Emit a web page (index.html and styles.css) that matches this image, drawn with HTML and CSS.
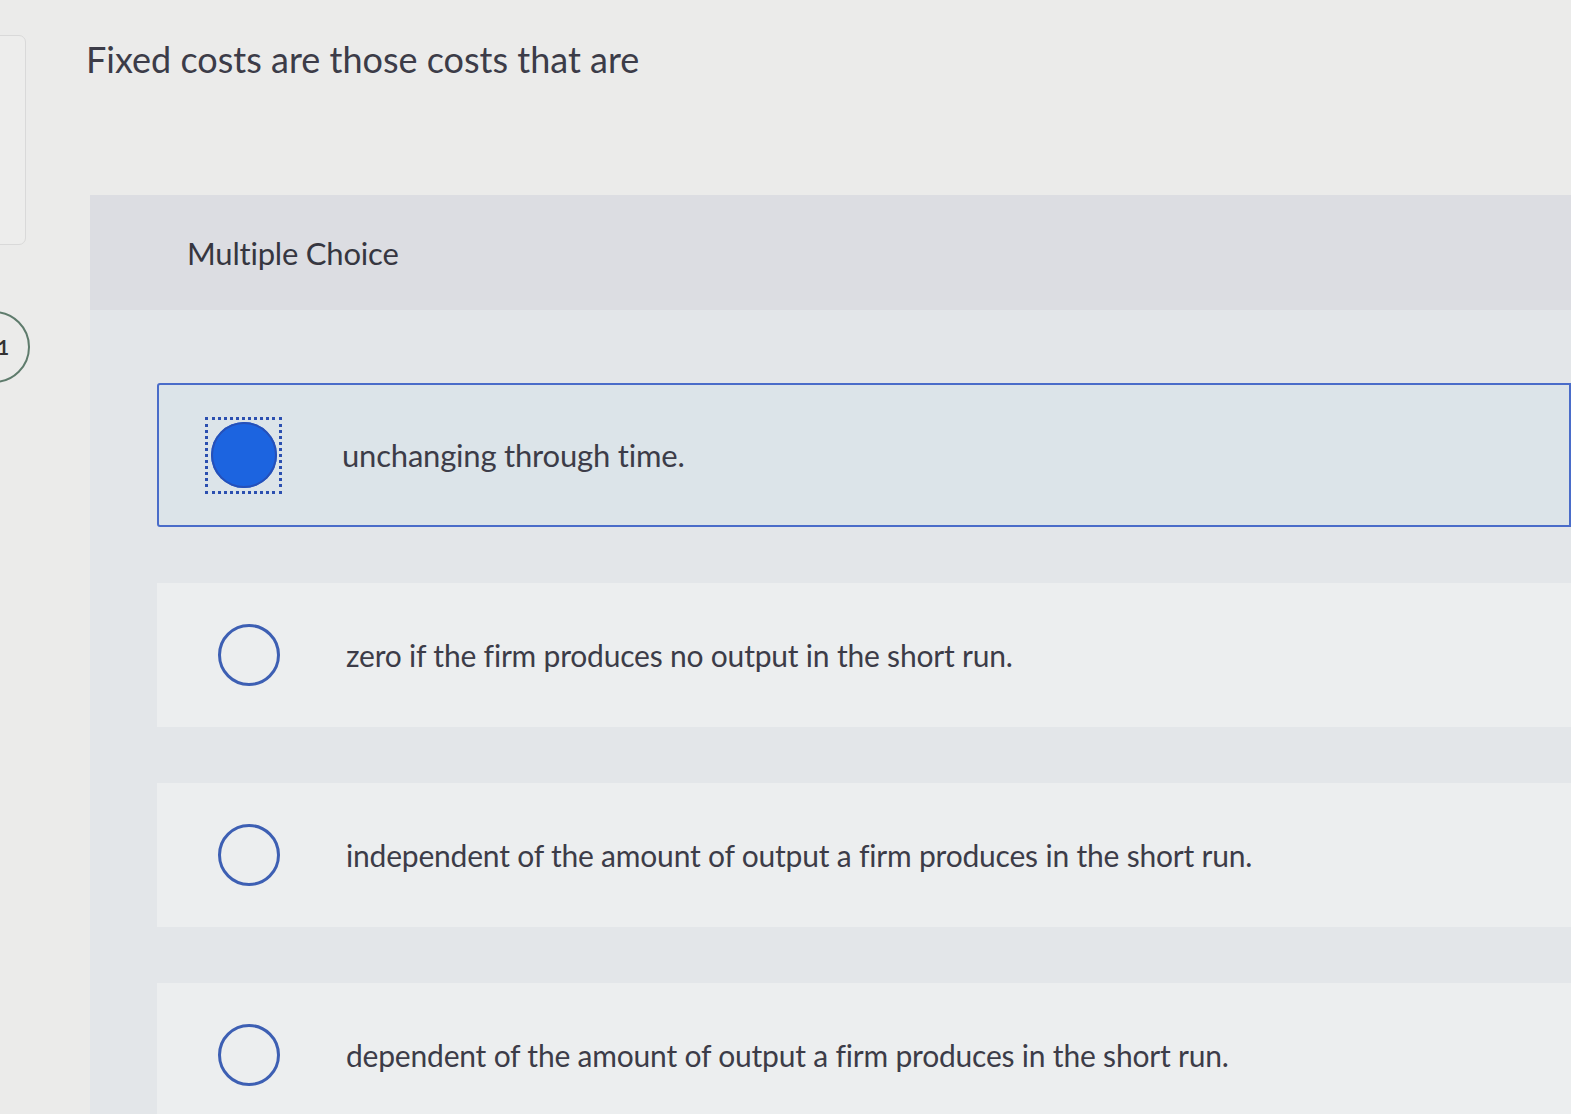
FILE: index.html
```html
<!DOCTYPE html>
<html lang="en">
<head>
<meta charset="utf-8">
<title>Multiple Choice</title>
<link rel="stylesheet" href="styles.css">
</head>
<body>
<div class="page">
  <aside class="gutter">
    <div class="card-stub"></div>
    <div class="qnum">1</div>
  </aside>
  <main class="main">
    <h1 class="question">Fixed costs are those costs that are</h1>
    <section class="mc">
      <div class="mc-head">Multiple Choice</div>
      <div class="mc-body">
        <div class="option selected">
          <span class="radio-focus"><span class="radio-dot"></span></span>
          <span class="label">unchanging through time.</span>
        </div>
        <div class="option">
          <span class="radio"></span>
          <span class="label">zero if the firm produces no output in the short run.</span>
        </div>
        <div class="option">
          <span class="radio"></span>
          <span class="label">independent of the amount of output a firm produces in the short run.</span>
        </div>
        <div class="option">
          <span class="radio"></span>
          <span class="label">dependent of the amount of output a firm produces in the short run.</span>
        </div>
      </div>
    </section>
  </main>
</div>
</body>
</html>
```
FILE: styles.css
```css
html, body {
  margin: 0;
  padding: 0;
  height: 100%;
  overflow: hidden;
}
body {
  background: #ebebea;
  font-family: Lato, "Open Sans", "Liberation Sans", sans-serif;
  color: #3e3e48;
}
.page {
  display: flex;
  height: 1114px;
}
.gutter {
  width: 86px;
  flex: none;
  display: flex;
  flex-direction: column;
}
.card-stub {
  width: 34px;
  height: 208px;
  margin-top: 35px;
  margin-left: -10px;
  border: 1px solid #d9d9d9;
  border-radius: 0 7px 7px 0;
  background: #ededec;
}
.qnum {
  width: 72px;
  height: 72px;
  margin-top: 66px;
  margin-left: -42px;
  border: 2px solid #5e7b6c;
  border-radius: 50%;
  display: flex;
  align-items: center;
  justify-content: flex-end;
  padding-right: 19px;
  box-sizing: border-box;
  font-size: 20px;
  font-weight: 700;
  color: #333;
}
.main {
  flex: 1;
  display: flex;
  flex-direction: column;
  min-width: 0;
}
.question {
  margin: 36px 0 0 0;
  font-size: 36px;
  font-weight: 400;
  line-height: 46px;
  color: #3c3c48;
  letter-spacing: 0;
}
.mc {
  margin-top: 113px;
  margin-left: 4px;
  flex: 1;
  display: flex;
  flex-direction: column;
}
.mc-head {
  height: 115px;
  background: #dcdde2;
  display: flex;
  align-items: center;
  padding-left: 97px;
  font-size: 31px;
  color: #363640;
  letter-spacing: -0.2px;
}
.mc-body {
  flex: 1;
  background: #e3e6e9;
  padding: 73px 0 0 67px;
  display: flex;
  flex-direction: column;
  gap: 56px;
}
.option {
  height: 144px;
  background: #eceeef;
  display: flex;
  align-items: center;
  padding-left: 61px;
  box-sizing: border-box;
  flex: none;
}
.option.selected {
  background: #dce4e9;
  border: 2px solid #4a6cc9;
  border-radius: 3px 0 0 3px;
  padding-left: 46px;
}
.radio {
  width: 62px;
  height: 62px;
  box-sizing: border-box;
  border: 3px solid #3d5fb3;
  border-radius: 50%;
  flex: none;
}
.radio-focus {
  width: 77px;
  height: 77px;
  box-sizing: border-box;
  border: 3px dotted #2b4fb0;
  display: flex;
  align-items: center;
  justify-content: center;
  flex: none;
}
.radio-dot {
  width: 66px;
  height: 66px;
  border-radius: 50%;
  background: #1c64e0;
  box-shadow: 0 0 0 2px #2650b8 inset;
}
.label {
  margin-left: 66px;
  font-size: 30px;
  color: #3c3c48;
  letter-spacing: -0.2px;
  white-space: nowrap;
}
.option.selected .label {
  margin-left: 60px;
  font-size: 31px;
}
```
